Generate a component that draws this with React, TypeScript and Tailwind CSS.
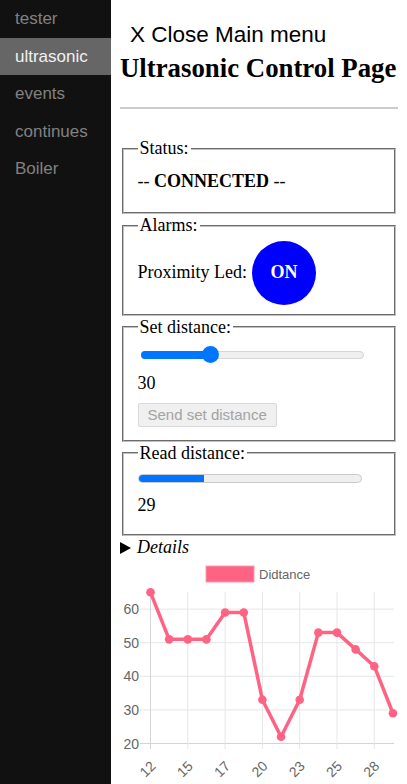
import type { ReactNode } from 'react';

const menu = ['tester', 'ultrasonic', 'events', 'continues', 'Boiler'];

const values = [65, 51, 51, 51, 59, 59, 33, 22, 33, 53, 53, 48, 43, 29];
const ticks: Record<number, string> = { 0: '12', 2: '15', 4: '17', 6: '20', 8: '23', 10: '25', 12: '28' };

const px = (i: number) => 30.5 + i * 18.65;
const py = (v: number) => 185.5 - (v - 20) * 3.36;

function Box({ title, className, children }: { title: string; className: string; children: ReactNode }) {
  return (
    <fieldset className={`mx-[2px] border-2 [border-style:groove] border-[#c0c0c0] px-[13.5px] ${className}`}>
      <legend className="px-[2px] leading-[21px]">{title}</legend>
      {children}
    </fieldset>
  );
}

function DistanceChart() {
  const line = values.map((v, i) => `${px(i)},${py(v)}`).join(' ');
  return (
    <svg width="278" height="228" className="block" fontFamily="'Liberation Sans', Arial, sans-serif">
      <rect x="86" y="8" width="48" height="16" fill="#ff6384" stroke="#ff9cb1" strokeWidth="1" />
      <text x="139" y="20.5" fontSize="13" fill="#666">Didtance</text>

      {[20, 30, 40, 50, 60].map((v) => (
        <g key={v}>
          <line x1="20" x2="274" y1={py(v)} y2={py(v)} stroke={v === 20 ? '#d4d4d4' : '#e6e6e6'} strokeWidth="1" />
          <text x="19" y={py(v) + 5} fontSize="14" fill="#666" textAnchor="end">{v}</text>
        </g>
      ))}

      {Object.keys(ticks).map((k) => {
        const i = Number(k);
        const x = px(i);
        return (
          <g key={k}>
            <line x1={x} x2={x} y1="34" y2="191" stroke={i === 0 ? '#d4d4d4' : '#e6e6e6'} strokeWidth="1" />
            <text
              x={x + 6}
              y="209"
              fontSize="14"
              fill="#666"
              textAnchor="end"
              transform={`rotate(-45 ${x + 6} 209)`}
            >
              {ticks[i]}
            </text>
          </g>
        );
      })}

      <polyline points={line} fill="none" stroke="#ff6384" strokeWidth="3.5" strokeLinejoin="round" />
      {values.map((v, i) => (
        <circle key={i} cx={px(i)} cy={py(v)} r="4.3" fill="#ff6384" />
      ))}
    </svg>
  );
}

export default function App() {
  return (
    <div className="flex min-h-screen bg-white">
      <nav className="w-[111px] shrink-0 bg-[#111] font-['Liberation_Sans',Arial,sans-serif] text-[17px]">
        {menu.map((item) => (
          <div
            key={item}
            className={`flex h-[37.6px] items-center pl-[15px] ${
              item === 'ultrasonic' ? 'bg-[#666] text-[#f1f1f1]' : 'text-[#818181]'
            }`}
          >
            {item}
          </div>
        ))}
      </nav>

      <main className="min-w-0 flex-1 pl-[9px] pr-[9px] font-['Liberation_Serif','Times_New_Roman',serif] text-[18px] text-black">
        <div className="mt-[22px] pl-[10px] font-['Liberation_Sans',Arial,sans-serif] text-[22.5px] leading-[26px]">
          X Close Main menu
        </div>
        <h2 className="mt-[5.4px] whitespace-nowrap text-[26.8px] font-bold leading-[31px]">Ultrasonic Control Page</h2>
        <hr className="mt-[22.3px] border-t-2 border-[#cdcdcd]" />

        <Box title="Status:" className="mt-[29.8px] pt-[12px] pb-[20px]">
          <div className="leading-[21px]">
            -- <b>CONNECTED</b> --
          </div>
        </Box>

        <Box title="Alarms:" className="mt-[1px] pt-[4.5px] pb-[9px]">
          <div className="flex items-center gap-[5px]">
            <span className="leading-[21px]">Proximity Led:</span>
            <div className="flex h-[64px] w-[64px] items-center justify-center rounded-full bg-[#0000ff] font-bold text-white">
              ON
            </div>
          </div>
        </Box>

        <Box title="Set distance:" className="mt-[1px] pt-[8px] pb-[11.2px]">
          <div className="relative ml-[3.5px] h-[18px] w-[223px]">
            <div className="absolute top-[5px] h-[8px] w-full rounded-full border border-[#d6d6d6] bg-[#efefef]" />
            <div className="absolute top-[5px] h-[8px] w-[69px] rounded-l-full bg-[#0075ff]" />
            <div className="absolute top-[0.5px] left-[60.5px] h-[17px] w-[17px] rounded-full bg-[#0075ff]" />
          </div>
          <div className="mt-[9.5px] leading-[21px]">30</div>
          <button
            disabled
            className="mt-[8.8px] h-[23.4px] rounded-[2px] border border-[#d9d9d9] bg-[#f0f0f0] px-[9px] font-['Liberation_Sans',Arial,sans-serif] text-[15px] leading-[21px] text-[#a3a3a3]"
          >
            Send set distance
          </button>
        </Box>

        <Box title="Read distance:" className="mt-[1px] pt-[10.5px] pb-[18.8px]">
          <div className="ml-[0.8px] h-[8.5px] w-[224px] overflow-hidden rounded-full border border-[#c9c9c9] bg-[#efefef]">
            <div className="h-full w-[65px] bg-[#0075ff]" />
          </div>
          <div className="mt-[12px] leading-[21px]">29</div>
        </Box>

        <div className="mt-[1px] flex items-center gap-[6px] leading-[21px]">
          <svg width="11" height="12" viewBox="0 0 11 12" className="shrink-0">
            <polygon points="0,0 11,6 0,12" fill="#000" />
          </svg>
          <i>Details</i>
        </div>

        <DistanceChart />
      </main>
    </div>
  );
}
